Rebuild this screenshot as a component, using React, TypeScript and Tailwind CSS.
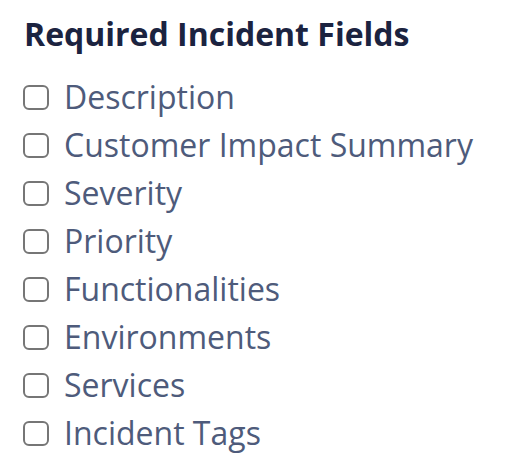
import React from 'react';

const fields = [
  'Description',
  'Customer Impact Summary',
  'Severity',
  'Priority',
  'Functionalities',
  'Environments',
  'Services',
  'Incident Tags',
];

export default function App() {
  return (
    <div className="w-[512px] h-[472px] bg-white pl-[23px] pt-[14px] font-['Open_Sans',sans-serif]">
      <h2 className="pl-[1px] text-[32px] leading-[40px] font-bold text-[#1b2340]">Required Incident Fields</h2>
      <ul className="mt-[19px] flex flex-col">
        {fields.map((f) => (
          <li key={f} className="flex items-center h-[48px] gap-[15px]">
            <span className="w-[26px] h-[25px] rounded-[6px] border-[2.5px] border-[#767676] bg-white shrink-0" />
            <span className="text-[32px] leading-[48px] text-[#4e5b7b]">{f}</span>
          </li>
        ))}
      </ul>
    </div>
  );
}
